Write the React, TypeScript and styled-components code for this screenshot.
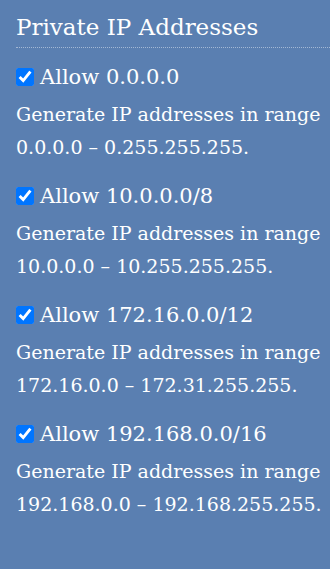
import React from "react";
import styled, { createGlobalStyle } from "styled-components";

const Global = createGlobalStyle`
  html, body { margin: 0; padding: 0; }
  body {
    background: #5a7fb1;
    color: #ffffff;
    font-family: Georgia, "DejaVu Serif", serif;
  }
`;

const Panel = styled.section`
  box-sizing: border-box;
  width: 330px;
  min-height: 569px;
  padding: 0 0 0 16px;
  background: #5a7fb1;
`;

const Title = styled.h2`
  margin: 0;
  padding: 13px 0 6px;
  font-size: 23px;
  font-weight: normal;
  line-height: 28px;
  border-bottom: 1px dotted rgba(255, 255, 255, 0.45);
`;

const List = styled.div`
  display: flex;
  flex-direction: column;
  gap: 14px;
  padding-top: 11px;
`;

const Item = styled.div`
  display: flex;
  flex-direction: column;
`;

const Label = styled.label`
  display: flex;
  align-items: center;
  gap: 6px;
  font-size: 21px;
  line-height: 36px;
`;

const Check = styled.input`
  width: 18px;
  height: 18px;
  margin: 0;
  accent-color: #0075ff;
`;

const Desc = styled.p`
  margin: 3px 0 0;
  font-size: 19px;
  line-height: 33px;
`;

const items = [
  { label: "Allow 0.0.0.0", from: "0.0.0.0", to: "0.255.255.255" },
  { label: "Allow 10.0.0.0/8", from: "10.0.0.0", to: "10.255.255.255" },
  { label: "Allow 172.16.0.0/12", from: "172.16.0.0", to: "172.31.255.255" },
  { label: "Allow 192.168.0.0/16", from: "192.168.0.0", to: "192.168.255.255" },
];

export default function App() {
  return (
    <Panel>
      <Global />
      <Title>Private IP Addresses</Title>
      <List>
        {items.map((it) => (
          <Item key={it.label}>
            <Label>
              <Check type="checkbox" defaultChecked />
              {it.label}
            </Label>
            <Desc>
              Generate IP addresses in range
              <br />
              {it.from} – {it.to}.
            </Desc>
          </Item>
        ))}
      </List>
    </Panel>
  );
}
